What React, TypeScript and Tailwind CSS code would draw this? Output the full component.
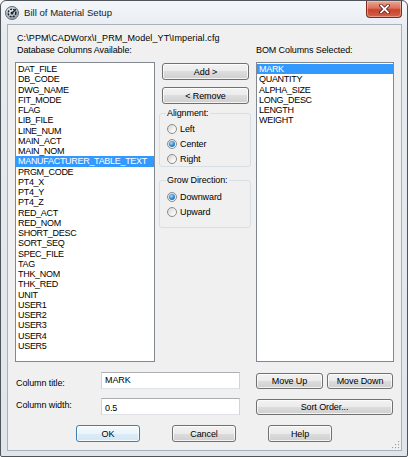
import React from "react";

const leftItems = [
  "DAT_FILE","DB_CODE","DWG_NAME","FIT_MODE","FLAG","LIB_FILE","LINE_NUM","MAIN_ACT","MAIN_NOM",
  "MANUFACTURER_TABLE_TEXT","PRGM_CODE","PT4_X","PT4_Y","PT4_Z","RED_ACT","RED_NOM","SHORT_DESC",
  "SORT_SEQ","SPEC_FILE","TAG","THK_NOM","THK_RED","UNIT","USER1","USER2","USER3","USER4","USER5",
];
const rightItems = ["MARK","QUANTITY","ALPHA_SIZE","LONG_DESC","LENGTH","WEIGHT"];

function Btn({ children, className = "", def = false }: { children: React.ReactNode; className?: string; def?: boolean }) {
  return (
    <div
      className={
        (def
          ? "border-[#3c7fb1] bg-[linear-gradient(#f5fafd,#eaf4fb_50%,#dcecf7_50%,#d3e7f5)] "
          : "border-[#707070] bg-[linear-gradient(#f2f2f2,#ebebeb_50%,#dddddd_50%,#cfcfcf)] ") +
        "flex items-center justify-center rounded-[3px] border shadow-[inset_0_0_0_1px_rgba(255,255,255,0.75)] leading-[12px] whitespace-pre " +
        className
      }
    >
      {children}
    </div>
  );
}

function Radio({ checked, label }: { checked?: boolean; label: string }) {
  return (
    <div className="flex items-center h-[15px] pl-[7px]">
      <div className="w-[10px] h-[10px] rounded-full border border-[#8b8b8b] bg-[linear-gradient(135deg,#d4d4d4,#f7f7f7_70%,#ffffff)] flex items-center justify-center">
        {checked && (
          <div className="w-[6px] h-[6px] rounded-full bg-[radial-gradient(circle_at_40%_35%,#a8dcfc,#2a82cf_55%,#124f93)]" />
        )}
      </div>
      <span className="ml-[3px] leading-[12px]">{label}</span>
    </div>
  );
}

function Group({ title, children, className = "" }: { title: string; children: React.ReactNode; className?: string }) {
  return (
    <div className={"relative border border-[#d5dfe5] rounded-[3px] " + className}>
      <span className="absolute left-[6px] top-[-7px] px-[1px] bg-[#f0f0f0] leading-[12px]">{title}</span>
      {children}
    </div>
  );
}

function ListBox({ items, selected, className = "" }: { items: string[]; selected: number; className?: string }) {
  return (
    <div className={"border border-[#828790] bg-white overflow-hidden pt-[1px] tracking-[-0.3px] " + className}>
      {items.map((it, i) => (
        <div
          key={it}
          className={
            (i === selected ? "bg-[#3399ff] text-white " : "") +
            "h-[10.25px] leading-[10.25px] pl-[2px] whitespace-nowrap"
          }
        >
          {it}
        </div>
      ))}
    </div>
  );
}

export default function App() {
  return (
    <div className="w-[408px] h-[457px] bg-white font-['Liberation_Sans',Arial,sans-serif] text-[9px] text-black tracking-[-0.1px]">
      <div className="w-[408px] h-[457px] flex flex-col border border-[#4f545a] rounded-t-[6px] rounded-b-[2px] bg-[linear-gradient(#f4f7fa,#e6ebf0_30px,#dfe5eb)] overflow-hidden">
        {/* title bar */}
        <div className="h-[23px] flex items-center pl-[4px]">
          <svg width="14" height="14" viewBox="0 0 14 14">
            <defs>
              <radialGradient id="ig" cx="0.4" cy="0.35" r="0.7">
                <stop offset="0" stopColor="#f4f6f8" />
                <stop offset="1" stopColor="#8e99a6" />
              </radialGradient>
            </defs>
            <circle cx="7" cy="7" r="6.5" fill="url(#ig)" stroke="#5f6b78" />
            <circle cx="7" cy="7" r="3.8" fill="none" stroke="#1d2329" strokeWidth="1.5" strokeDasharray="2 1.1" />
            <circle cx="7" cy="7" r="1.5" fill="#1d2329" />
            <path d="M7 7 L11 3.2" stroke="#1d2329" strokeWidth="1.2" />
          </svg>
          <span className="ml-[5px] text-[9.6px] tracking-[0px] leading-[12px] text-[#1b1b1b]">Bill of Material Setup</span>
          <div className="ml-auto mr-[5px] self-start w-[36px] h-[17px] rounded-b-[4px] border border-t-0 border-[#7d2a1e] bg-[linear-gradient(#eba898,#dc6e58_45%,#c9432b_55%,#d4624a)] shadow-[inset_0_0_0_1px_rgba(255,220,210,0.45)] flex items-center justify-center">
            <svg width="11" height="10" viewBox="0 0 11 10">
              <path d="M2 1.5 L9 8.5 M9 1.5 L2 8.5" stroke="#5a1c12" strokeWidth="3.4" strokeLinecap="square" />
              <path d="M2 1.5 L9 8.5 M9 1.5 L2 8.5" stroke="#ffffff" strokeWidth="1.8" strokeLinecap="square" />
            </svg>
          </div>
        </div>

        {/* client */}
        <div className="ml-[6px] mr-[5px] h-[427px] border border-[#a9b2bc] bg-[#f0f0f0] flex flex-col relative">
          <div className="pt-[7px] pl-[9px] leading-[12px] h-[19px] tracking-[0.1px]">{"C:\\PPM\\CADWorx\\I_PRM_Model_YT\\Imperial.cfg"}</div>

          <div className="flex pl-[7px]">
            <div className="w-[140px] flex flex-col">
              <div className="h-[12px] leading-[12px] pl-[2px] whitespace-nowrap">Database Columns Available:</div>
              <ListBox items={leftItems} selected={9} className="mt-[6px] h-[300px]" />
            </div>

            <div className="w-[92px] ml-[4px] flex flex-col pt-[19px]">
              <Btn className="ml-[3px] w-[87px] h-[17px]">{"Add >"}</Btn>
              <Btn className="ml-[3px] w-[87px] h-[17px] mt-[7px]">{"< Remove"}</Btn>
              <Group title="Alignment:" className="mt-[9px] pt-[7px] pb-[0px]">
                <Radio label="Left" />
                <Radio label="Center" checked />
                <Radio label="Right" />
              </Group>
              <Group title="Grow Direction:" className="mt-[13px] pt-[8px] pb-[8px]">
                <Radio label="Downward" checked />
                <Radio label="Upward" />
              </Group>
            </div>

            <div className="w-[138px] ml-[5px] flex flex-col">
              <div className="h-[12px] leading-[12px] whitespace-nowrap">BOM Columns Selected:</div>
              <ListBox items={rightItems} selected={0} className="mt-[6px] h-[300px]" />
            </div>
          </div>

          {/* row 1 */}
          <div className="flex items-start pl-[8px] mt-[10px] h-[17px]">
            <div className="w-[85px] mt-[5px] leading-[12px]">Column title:</div>
            <div className="w-[139px] h-[17px] bg-white border border-[#abadb3] border-b-[#dfe3e8] border-l-[#d0d3d8] border-r-[#d0d3d8] pl-[3px] pt-[1px] leading-[12px]">MARK</div>
            <Btn className="ml-[16px] mt-[1px] w-[67px] h-[16px]">Move Up</Btn>
            <Btn className="ml-[4px] mt-[1px] w-[66px] h-[16px]">Move Down</Btn>
          </div>

          {/* row 2 */}
          <div className="flex items-start pl-[8px] mt-[9px] h-[17px]">
            <div className="w-[85px] mt-[1px] leading-[12px]">Column width:</div>
            <div className="w-[139px] h-[17px] bg-white border border-[#abadb3] border-b-[#dfe3e8] border-l-[#d0d3d8] border-r-[#d0d3d8] pl-[3px] pt-[3px] leading-[12px]">0.5</div>
            <Btn className="ml-[16px] mt-[1px] w-[137px] h-[16px]">Sort Order...</Btn>
          </div>

          {/* row 3 */}
          <div className="flex pl-[68px] gap-[32px] mt-[10px]">
            <Btn def className="w-[64px] h-[17px]">OK</Btn>
            <Btn className="w-[64px] h-[17px]">Cancel</Btn>
            <Btn className="w-[64px] h-[17px]">Help</Btn>
          </div>

          {/* size grip */}
          <svg className="absolute right-[1px] bottom-[1px]" width="9" height="9" viewBox="0 0 9 9">
            {[[7, 1], [7, 4], [4, 4], [7, 7], [4, 7], [1, 7]].map(([x, y], i) => (
              <g key={i}>
                <rect x={x + 0.6} y={y + 0.6} width="1.2" height="1.2" fill="#ffffff" />
                <rect x={x} y={y} width="1.2" height="1.2" fill="#9aa0a6" />
              </g>
            ))}
          </svg>
        </div>
      </div>
    </div>
  );
}
